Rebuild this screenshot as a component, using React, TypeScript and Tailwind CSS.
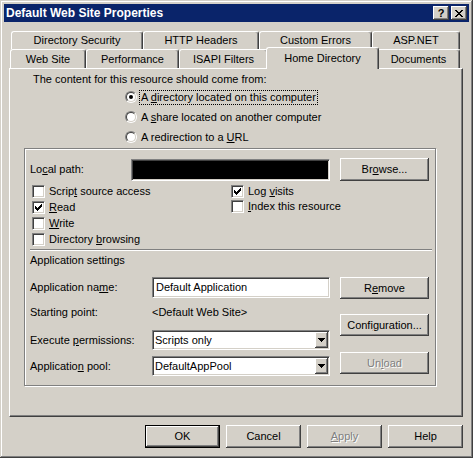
import React from "react";

const raised =
  "bg-[#d4d0c8] shadow-[inset_-1px_-1px_#404040,inset_1px_1px_#ffffff,inset_-2px_-2px_#808080,inset_2px_2px_#d4d0c8]";
const sunken =
  "border border-t-[#808080] border-l-[#808080] border-r-white border-b-white shadow-[inset_1px_1px_#404040,inset_-1px_-1px_#d4d0c8]";
const disabledText = "text-[#808080] [text-shadow:1px_1px_0_#ffffff]";

function Key({ children }: { children: React.ReactNode }) {
  return <span className="underline underline-offset-[1px]">{children}</span>;
}

function Btn({
  children,
  w = 89,
  h = 22,
  isDefault = false,
  disabled = false,
}: {
  children: React.ReactNode;
  w?: number;
  h?: number;
  isDefault?: boolean;
  disabled?: boolean;
}) {
  const size = w === 75 ? "w-[75px]" : "w-[89px]";
  const height = h === 23 ? "h-[23px]" : "h-[22px]";
  if (isDefault) {
    return (
      <div className={`${size} ${height} border border-black`}>
        <div className={`w-full h-full ${raised} flex items-center justify-center`}>{children}</div>
      </div>
    );
  }
  return (
    <div
      className={`${size} ${height} ${raised} flex items-center justify-center ${disabled ? disabledText : ""}`}
    >
      {children}
    </div>
  );
}

function Check({ checked }: { checked?: boolean }) {
  return (
    <div className={`w-[13px] h-[13px] bg-white ${sunken} flex items-center justify-center shrink-0`}>
      {checked && (
        <svg width="7" height="7" viewBox="0 0 7 7" shapeRendering="crispEdges">
          <rect x="0" y="2" width="1" height="3" fill="#000" />
          <rect x="1" y="3" width="1" height="3" fill="#000" />
          <rect x="2" y="4" width="1" height="3" fill="#000" />
          <rect x="3" y="3" width="1" height="3" fill="#000" />
          <rect x="4" y="2" width="1" height="3" fill="#000" />
          <rect x="5" y="1" width="1" height="3" fill="#000" />
          <rect x="6" y="0" width="1" height="3" fill="#000" />
        </svg>
      )}
    </div>
  );
}

function Radio({ checked }: { checked?: boolean }) {
  return (
    <div className="w-[12px] h-[12px] rounded-full border border-t-[#808080] border-l-[#808080] border-r-white border-b-white shrink-0">
      <div className="w-full h-full rounded-full bg-white border border-t-[#404040] border-l-[#404040] border-r-[#d4d0c8] border-b-[#d4d0c8] flex items-center justify-center">
        {checked && <div className="w-[4px] h-[4px] rounded-full bg-black" />}
      </div>
    </div>
  );
}

function Combo({ value }: { value: string }) {
  return (
    <div className={`w-[178px] h-[20px] bg-white ${sunken} flex items-center`}>
      <span className="flex-1 pl-[2px]">{value}</span>
      <div className={`w-[13px] h-[16px] mr-[1px] ${raised} flex items-center justify-center`}>
        <svg width="7" height="4" viewBox="0 0 7 4" shapeRendering="crispEdges">
          <rect x="0" y="0" width="7" height="1" fill="#000" />
          <rect x="1" y="1" width="5" height="1" fill="#000" />
          <rect x="2" y="2" width="3" height="1" fill="#000" />
          <rect x="3" y="3" width="1" height="1" fill="#000" />
        </svg>
      </div>
    </div>
  );
}

function Tab({ label, w, h }: { label: string; w: string; h: string }) {
  return (
    <div
      className={`${w} ${h} flex items-center justify-center rounded-t-[3px] border-l border-t border-r border-l-white border-t-white border-r-[#404040] shadow-[inset_-1px_0_#808080]`}
    >
      {label}
    </div>
  );
}

export default function App() {
  return (
    <div className="w-[473px] h-[458px] bg-[#d4d0c8] p-[4px] shadow-[inset_-1px_-1px_#404040,inset_1px_1px_#d4d0c8,inset_-2px_-2px_#808080,inset_2px_2px_#ffffff] font-['Liberation_Sans',Arial,sans-serif] text-[11px] leading-[13px] text-black overflow-hidden select-none">
      {/* title bar */}
      <div className="h-[18px] bg-[#0a246a] flex items-center pl-[2px] pr-[2px]">
        <span className="flex-1 text-white font-bold text-[12px]">Default Web Site Properties</span>
        <div className="flex gap-[2px]">
          <div className={`w-[16px] h-[14px] ${raised} flex items-center justify-center font-bold text-[11px] leading-none`}>
            ?
          </div>
          <div className={`w-[16px] h-[14px] ${raised} flex items-center justify-center`}>
            <svg width="8" height="7" viewBox="0 0 8 7" shapeRendering="crispEdges">
              <path d="M0 0h2v1h-2z M6 0h2v1h-2z M1 1h2v1h-2z M5 1h2v1h-2z M2 2h4v1h-4z M3 3h2v1h-2z M2 4h4v1h-4z M1 5h2v1h-2z M5 5h2v1h-2z M0 6h2v1h-2z M6 6h2v1h-2z" fill="#000" />
            </svg>
          </div>
        </div>
      </div>

      {/* tabs */}
      <div className="ml-[5px] mt-[9px]">
        <div className="flex ml-[2px] h-[18px]">
          <Tab label="Directory Security" w="w-[132px]" h="h-[18px]" />
          <Tab label="HTTP Headers" w="w-[116px]" h="h-[18px]" />
          <Tab label="Custom Errors" w="w-[113px]" h="h-[18px]" />
          <Tab label="ASP.NET" w="w-[88px]" h="h-[18px]" />
        </div>
        <div className="flex ml-[1px] h-[19px] items-end">
          <Tab label="Web Site" w="w-[76px]" h="h-[19px]" />
          <Tab label="Performance" w="w-[93px]" h="h-[19px]" />
          <Tab label="ISAPI Filters" w="w-[89px]" h="h-[19px]" />
          <div className="relative z-10 w-[113px] h-[22px] -mx-[2px] -mb-px bg-[#d4d0c8] flex items-start justify-center pt-[4px] rounded-t-[3px] border-l border-t border-r border-l-white border-t-white border-r-[#404040] shadow-[inset_-1px_0_#808080]">
            Home Directory
          </div>
          <Tab label="Documents" w="w-[83px]" h="h-[19px]" />
        </div>

        {/* panel */}
        <div className="w-[454px] h-[349px] border border-t-white border-l-white border-r-[#404040] border-b-[#404040] shadow-[inset_-1px_-1px_#808080]">
          <div className="pt-[4px] pl-[23px] h-[17px]">The content for this resource should come from:</div>
          <div className="mt-[1px]">
            <div className="h-[20px] flex items-center pl-[115px] gap-[3px]">
              <Radio checked />
              <span className="outline outline-1 outline-dotted outline-black px-[1px]">
                A <Key>d</Key>irectory located on this computer
              </span>
            </div>
            <div className="h-[20px] flex items-center pl-[115px] gap-[4px]">
              <Radio />
              <span>
                A <Key>s</Key>hare located on another computer
              </span>
            </div>
            <div className="h-[20px] flex items-center pl-[115px] gap-[4px]">
              <Radio />
              <span>
                A redirection to a <Key>U</Key>RL
              </span>
            </div>
          </div>

          {/* group box */}
          <div className="mt-[1px] ml-[14px] w-[412px] h-[238px] border border-[#808080] shadow-[inset_1px_1px_#ffffff,1px_1px_#ffffff]">
            <div className="mt-[9px] flex items-center h-[23px]">
              <span className="pl-[5px] w-[106px]">
                Lo<Key>c</Key>al path:
              </span>
              <div className={`w-[199px] h-[22px] bg-black ${sunken}`} />
              <div className="ml-[10px]">
                <Btn h={23}>
                  Br<Key>o</Key>wse...
                </Btn>
              </div>
            </div>

            <div className="mt-[2px] flex">
              <div className="pl-[7px] w-[206px]">
                <div className="h-[16px] flex items-center gap-[4px]">
                  <Check />
                  <span>
                    Scrip<Key>t</Key> source access
                  </span>
                </div>
                <div className="h-[16px] flex items-center gap-[4px]">
                  <Check checked />
                  <span>
                    <Key>R</Key>ead
                  </span>
                </div>
                <div className="h-[16px] flex items-center gap-[4px]">
                  <Check />
                  <span>
                    <Key>W</Key>rite
                  </span>
                </div>
                <div className="h-[16px] flex items-center gap-[4px]">
                  <Check />
                  <span>
                    Directory <Key>b</Key>rowsing
                  </span>
                </div>
              </div>
              <div>
                <div className="h-[16px] flex items-center gap-[4px]">
                  <Check checked />
                  <span>
                    Log <Key>v</Key>isits
                  </span>
                </div>
                <div className="h-[15px] flex items-center gap-[4px]">
                  <Check />
                  <span>
                    <Key>I</Key>ndex this resource
                  </span>
                </div>
              </div>
            </div>

            <div className="mt-[2px] ml-[5px] w-[402px] h-[2px] border-t border-t-[#808080] border-b border-b-white" />
            <div className="mt-[3px] pl-[5px] h-[13px]">Application settings</div>

            <div className="mt-[10px] flex">
              <div className="pl-[5px] w-[305px]">
                <div className="flex items-center h-[21px]">
                  <span className="w-[122px]">
                    Application na<Key>m</Key>e:
                  </span>
                  <div className={`w-[178px] h-[21px] bg-white ${sunken} flex items-center pl-[3px]`}>
                    Default Application
                  </div>
                </div>
                <div className="mt-[8px] h-[13px] flex">
                  <span className="w-[122px]">Starting point:</span>
                  <span>&lt;Default Web Site&gt;</span>
                </div>
                <div className="mt-[11px] flex items-center h-[20px]">
                  <span className="w-[122px]">
                    Execute <Key>p</Key>ermissions:
                  </span>
                  <Combo value="Scripts only" />
                </div>
                <div className="mt-[6px] flex items-center h-[20px]">
                  <span className="w-[122px]">
                    Applicatio<Key>n</Key> pool:
                  </span>
                  <Combo value="DefaultAppPool" />
                </div>
              </div>
              <div className="ml-[10px]">
                <Btn>
                  R<Key>e</Key>move
                </Btn>
                <div className="mt-[15px]">
                  <Btn>
                    Confi<Key>g</Key>uration...
                  </Btn>
                </div>
                <div className="mt-[16px]">
                  <Btn disabled>
                    Un<Key>l</Key>oad
                  </Btn>
                </div>
              </div>
            </div>
          </div>
        </div>
      </div>

      {/* dialog buttons */}
      <div className="mt-[8px] flex justify-end gap-[6px] pr-[6px]">
        <Btn w={75} h={23} isDefault>
          OK
        </Btn>
        <Btn w={75} h={23}>
          Cancel
        </Btn>
        <Btn w={75} h={23} disabled>
          <Key>A</Key>pply
        </Btn>
        <Btn w={75} h={23}>
          Help
        </Btn>
      </div>
    </div>
  );
}
